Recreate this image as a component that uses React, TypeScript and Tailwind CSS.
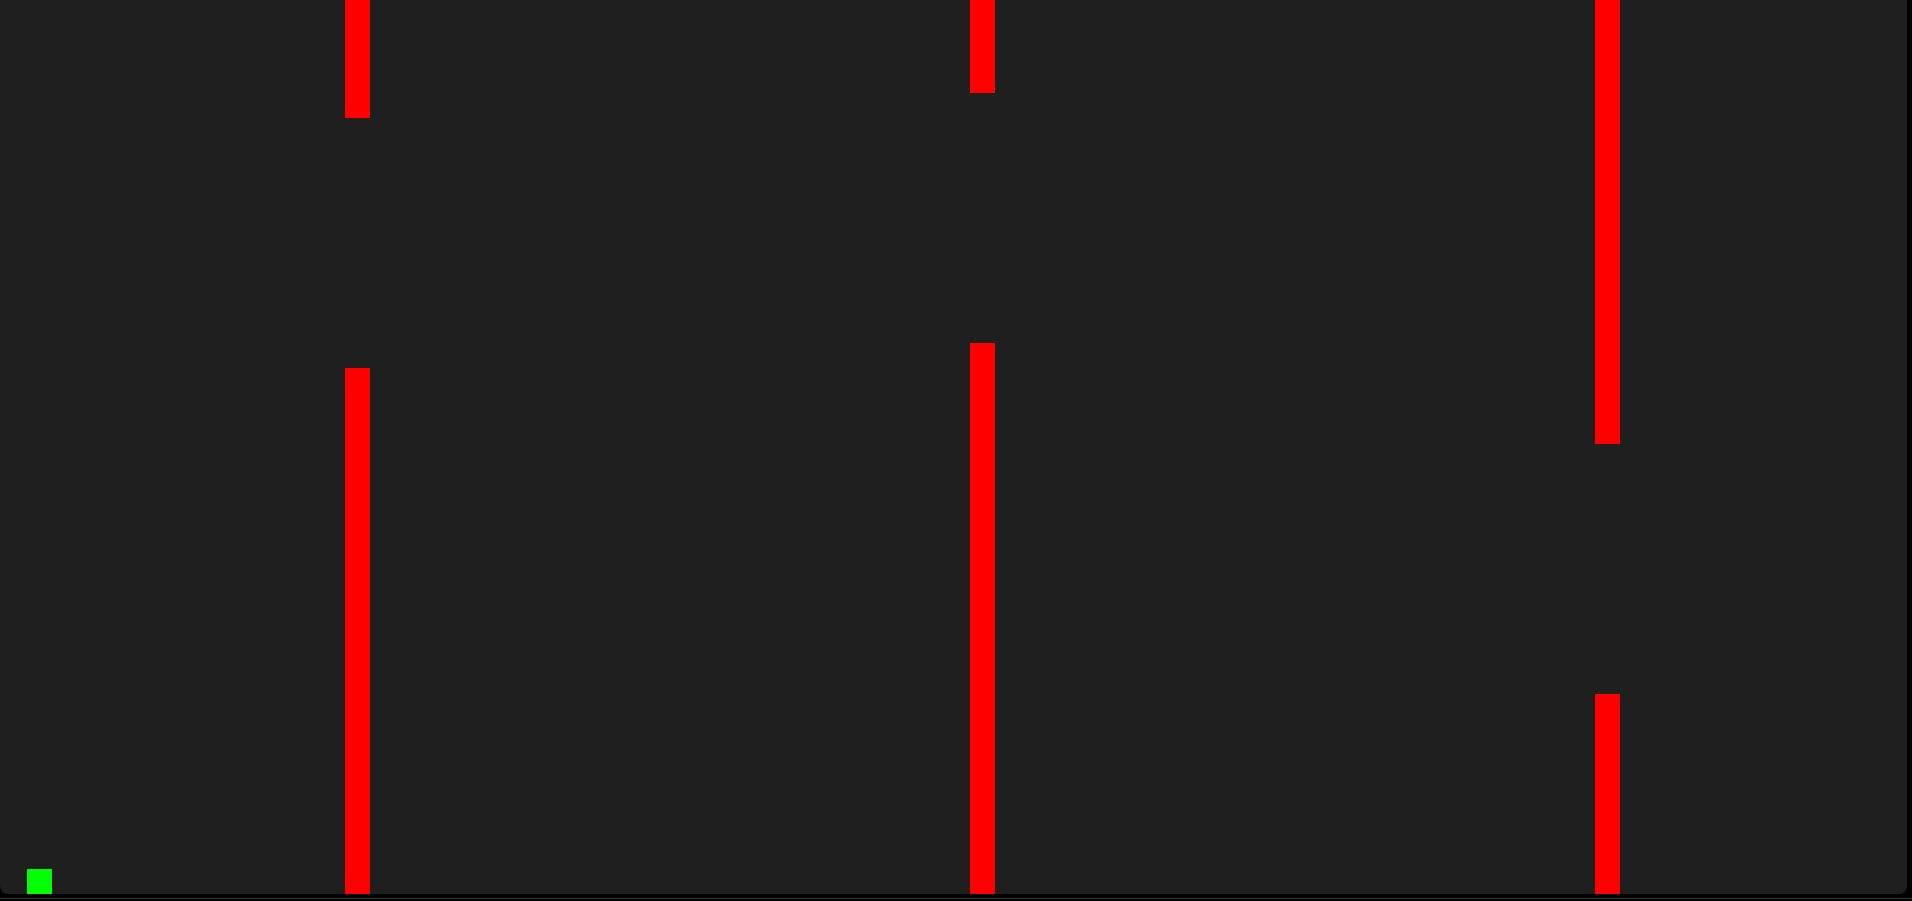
import React from "react";

// Tuberías: x, alto de la parte de arriba; hueco fijo de 250px
const pipes = [
  { x: 345, top: 118 },
  { x: 970, top: 93 },
  { x: 1595, top: 444 },
];

const GAP = 250;
const HEIGHT = 894;

export default function App() {
  return (
    <div className="min-h-screen w-full bg-black">
      <div className="relative h-[894px] w-[1907px] overflow-hidden rounded-b-lg bg-[#1f1f1f]">
        {pipes.map((p, i) => (
          <React.Fragment key={i}>
            <div
              className="absolute top-0 w-[25px] bg-[#ff0000]"
              style={{ left: p.x, height: p.top }}
            />
            <div
              className="absolute bottom-0 w-[25px] bg-[#ff0000]"
              style={{ left: p.x, height: HEIGHT - p.top - GAP }}
            />
          </React.Fragment>
        ))}
        {/* Pájaro */}
        <div className="absolute left-[27px] top-[869px] h-[25px] w-[25px] bg-[#00ff00]" />
      </div>
      <div className="mt-[4px] h-px w-full bg-[#3a3a3a]" />
    </div>
  );
}
